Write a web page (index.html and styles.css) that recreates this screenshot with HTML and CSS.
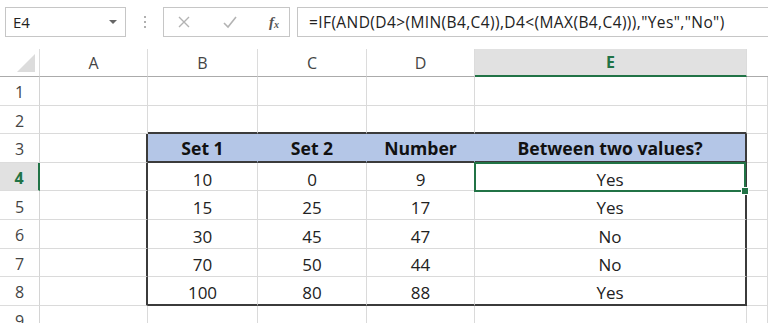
FILE: index.html
```html
<!DOCTYPE html>
<html lang="en">

<head>
  <meta charset="UTF-8">
  <meta name="viewport" content="width=device-width, initial-scale=1.0">
  <title>Between two values</title>
  <link rel="stylesheet" href="styles.css">
</head>

<body>
  <!-- formula bar -->
  <div class="bar">
    <div class="namebox">
      <span>E4</span>
      <span class="caret"></span>
    </div>
    <div class="dots"><i></i><i></i><i></i></div>
    <div class="btns">
      <svg class="ico" width="14" height="14" viewBox="0 0 14 14"><path d="M2 2L12 12M12 2L2 12" stroke="#b3b3b3" stroke-width="1.4" fill="none"/></svg>
      <svg class="ico" width="16" height="14" viewBox="0 0 16 14"><path d="M2 8L6 12L14 2" stroke="#b3b3b3" stroke-width="1.6" fill="none"/></svg>
      <span class="fx">f<sub>x</sub></span>
    </div>
    <div class="formula">=IF(AND(D4&gt;(MIN(B4,C4)),D4&lt;(MAX(B4,C4))),"Yes","No")</div>
  </div>

  <!-- sheet -->
  <div class="sheet">
    <div class="ch corner"><span class="tri"></span></div>
    <div class="ch">A</div>
    <div class="ch">B</div>
    <div class="ch">C</div>
    <div class="ch">D</div>
    <div class="ch sel">E</div>
    <div class="ch last"></div>

    <div class="rh">1</div>
    <div class="c"></div><div class="c"></div><div class="c"></div><div class="c"></div><div class="c"></div><div class="c"></div>

    <div class="rh">2</div>
    <div class="c"></div>
    <div class="c above"></div><div class="c above"></div><div class="c above"></div><div class="c above"></div>
    <div class="c"></div>

    <div class="rh">3</div>
    <div class="c left"></div>
    <div class="c th">Set 1</div>
    <div class="c th">Set 2</div>
    <div class="c th">Number</div>
    <div class="c th right">Between two values?</div>
    <div class="c"></div>

    <div class="rh sel">4</div>
    <div class="c left"></div>
    <div class="c">10</div>
    <div class="c">0</div>
    <div class="c">9</div>
    <div class="c right active">Yes</div>
    <div class="c"></div>

    <div class="rh">5</div>
    <div class="c left"></div>
    <div class="c">15</div>
    <div class="c">25</div>
    <div class="c">17</div>
    <div class="c right">Yes</div>
    <div class="c"></div>

    <div class="rh">6</div>
    <div class="c left"></div>
    <div class="c">30</div>
    <div class="c">45</div>
    <div class="c">47</div>
    <div class="c right">No</div>
    <div class="c"></div>

    <div class="rh">7</div>
    <div class="c left"></div>
    <div class="c">70</div>
    <div class="c">50</div>
    <div class="c">44</div>
    <div class="c right">No</div>
    <div class="c"></div>

    <div class="rh">8</div>
    <div class="c left"></div>
    <div class="c bottom">100</div>
    <div class="c bottom">80</div>
    <div class="c bottom">88</div>
    <div class="c bottom right">Yes</div>
    <div class="c"></div>

    <div class="rh">9</div>
    <div class="c"></div><div class="c"></div><div class="c"></div><div class="c"></div><div class="c"></div><div class="c"></div>
  </div>
</body>

</html>
```

FILE: styles.css
```css
* {
  margin: 0;
  padding: 0;
  box-sizing: border-box;
}

html,
body {
  width: 768px;
  height: 323px;
  overflow: hidden;
  background-color: #fff;
}

body {
  font-family: "Open Sans", "Noto Sans", sans-serif;
  color: #222;
}

/* formula bar */
.bar {
  height: 49px;
  display: flex;
  align-items: flex-start;
  padding: 7px 0 0 5px;
}

.namebox {
  width: 121px;
  height: 30px;
  border: 1px solid #c6c6c6;
  display: flex;
  align-items: center;
  justify-content: space-between;
  padding: 0 8px 0 7px;
  font-size: 15px;
  color: #222;
}

.caret {
  width: 0;
  height: 0;
  border-left: 4px solid transparent;
  border-right: 4px solid transparent;
  border-top: 4px solid #666;
}

.dots {
  width: 37px;
  height: 30px;
  display: flex;
  flex-direction: column;
  align-items: center;
  justify-content: center;
  gap: 3px;
}

.dots i {
  display: block;
  width: 2px;
  height: 2px;
  background-color: #b0b0b0;
}

.btns {
  width: 127px;
  height: 30px;
  border: 1px solid #c6c6c6;
  display: flex;
  align-items: center;
  padding: 0 10px 0 13px;
  justify-content: space-between;
}

.fx {
  font-family: "Liberation Serif", serif;
  font-style: italic;
  font-weight: bold;
  font-size: 15px;
  color: #555;
}

.fx sub {
  font-size: 10px;
  vertical-align: -1px;
}

.formula {
  flex: 1;
  margin-left: 7px;
  height: 30px;
  border: 1px solid #c6c6c6;
  border-right: none;
  display: flex;
  align-items: center;
  padding-left: 11px;
  font-size: 15.5px;
  letter-spacing: 0.4px;
  color: #222;
  white-space: nowrap;
}

/* grid */
.sheet {
  display: grid;
  grid-template-columns: 40px 108px 110px 109px 108px 272px 1fr;
  grid-template-rows: 28px repeat(9, 28.6px);
}

.ch,
.rh,
.c {
  display: flex;
  align-items: center;
  justify-content: center;
  white-space: nowrap;
}

.ch {
  font-size: 16px;
  color: #444;
  border-right: 1px solid #dcdcdc;
  border-bottom: 1px solid #ababab;
}

.ch.last {
  border-right: none;
}

.ch.sel {
  background-color: #e1e1e1;
  color: #217346;
  font-weight: bold;
  border-bottom: 2px solid #217346;
}

.corner {
  justify-content: flex-end;
  align-items: flex-end;
  padding: 0 4px 4px 0;
}

.tri {
  width: 0;
  height: 0;
  border-left: 18px solid transparent;
  border-bottom: 18px solid #dcdcdc;
}

.rh {
  font-size: 16px;
  color: #444;
  padding-top: 3px;
  border-right: 1px solid #d4d4d4;
  border-bottom: 1px solid #dcdcdc;
}

.rh.sel {
  background-color: #e1e1e1;
  color: #217346;
  font-weight: bold;
  border-right: 2px solid #217346;
}

.c {
  font-size: 17px;
  padding-top: 5px;
  border-right: 1px solid #dadada;
  border-bottom: 1px solid #dadada;
}

/* table edges */
.c.above {
  border-bottom: 2px solid #3b3b3b;
}

.c.left {
  border-right: 2px solid #3b3b3b;
}

.c.right {
  border-right: 2px solid #3b3b3b;
}

.c.bottom {
  border-bottom: 2px solid #3b3b3b;
}

.c.th {
  background-color: #b4c6e7;
  font-weight: bold;
  font-size: 17.6px;
  color: #111;
  padding-top: 1px;
  border-right-color: #b4c6e7;
  border-bottom: 2px solid #3b3b3b;
}

.c.th.right {
  border-right-color: #3b3b3b;
}

/* selected cell */
.active {
  position: relative;
}

.active::after {
  content: "";
  position: absolute;
  top: -1px;
  left: -1px;
  right: -1px;
  bottom: -2px;
  border: 2px solid #217346;
}

.active::before {
  content: "";
  position: absolute;
  right: -4px;
  bottom: -5px;
  width: 6px;
  height: 6px;
  background-color: #217346;
  border: 1px solid #fff;
  z-index: 1;
}
```
